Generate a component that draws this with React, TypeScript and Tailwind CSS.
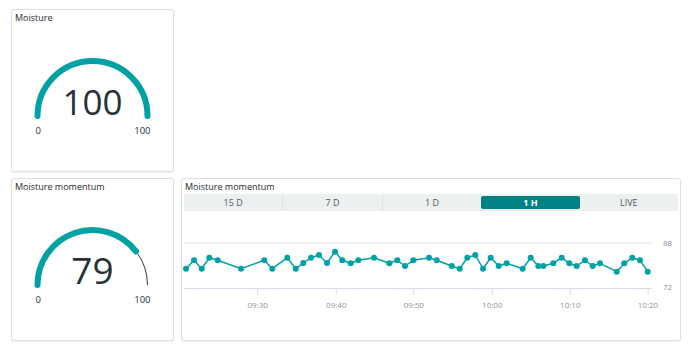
// Dashboard: two gauges and a moisture line chart with range tabs.
const TEAL = '#00a1a5';
const FONT = '"Open Sans", "Noto Sans", sans-serif';

// chart points in page px, shifted into the chart svg below
const POINTS: [number, number][] = [
  [186, 268.7], [194, 260.3], [201.7, 268.7], [209.3, 257.7], [217.7, 260.3],
  [241, 268.7], [264.3, 260.3], [272.3, 268.7], [287.3, 257.7], [295.7, 268.7],
  [303.3, 263], [311, 257.7], [319, 255], [327, 263], [335, 251.7],
  [342.3, 260.3], [350.7, 263.3], [358.3, 260.3], [374, 257.7], [389.3, 263.3],
  [397.3, 260.3], [405, 266], [413.3, 260.3], [429, 257.7], [436.7, 260.3],
  [451.7, 266], [459.7, 268.7], [467.3, 257.7], [475.3, 255], [483, 268.7],
  [490.7, 257.7], [498.7, 266], [506.7, 263.3], [522.7, 268.7], [530.7, 257.7],
  [538.3, 266], [543.3, 266], [553.3, 263.3], [561.7, 257.7], [569.3, 263.3],
  [576.7, 266], [585, 260.3], [592.7, 266], [600, 263.3], [616.7, 271.7],
  [624.3, 263.3], [632.3, 257.7], [640, 260.3], [647.7, 271.7],
];

const TICKS = [
  { x: 257.7, label: '09:30' },
  { x: 336.3, label: '09:40' },
  { x: 413.7, label: '09:50' },
  { x: 492.3, label: '10:00' },
  { x: 570.3, label: '10:10' },
  { x: 648, label: '10:20' },
];

const TABS = ['15 D', '7 D', '1 D', '1 H', 'LIVE'];

function Card({ title, className, children }: { title: string; className: string; children: React.ReactNode }) {
  return (
    <div
      className={`flex flex-col rounded-[3px] border border-[#dadfdf] bg-white shadow-[0_1px_2px_rgba(0,0,0,0.06)] ${className}`}
    >
      <div className="h-[15px] pl-[3px] pt-[1px] text-[9px] leading-[13px] text-[#1f2a30]">{title}</div>
      {children}
    </div>
  );
}

function Gauge({ value, size }: { value: number; size: number }) {
  const cx = 80.5;
  const cy = 91;
  const r = 55;
  const a = Math.PI - (value / 100) * Math.PI;
  const ex = cx + r * Math.cos(a);
  const ey = cy - r * Math.sin(a);
  return (
    <svg width="161" height="145" style={{ fontFamily: FONT }}>
      {value < 100 && (
        <path d={`M ${ex} ${ey} A ${r} ${r} 0 0 1 ${cx + r} ${cy}`} fill="none" stroke="#2f3a40" strokeWidth="1" />
      )}
      <path
        d={`M ${cx - r} ${cy} A ${r} ${r} 0 0 1 ${ex} ${ey}`}
        fill="none"
        stroke={TEAL}
        strokeWidth="6"
        strokeLinecap="round"
      />
      <text x={cx} y="90" textAnchor="middle" fontSize={size} fontWeight="400" fill="#263238">
        {value}
      </text>
      <text x="23.5" y="109" fontSize="9.5" fill="#263238">0</text>
      <text x="138.5" y="109" textAnchor="end" fontSize="9.5" fill="#263238">100</text>
    </svg>
  );
}

function Chart() {
  const ox = 182;
  const oy = 211;
  const pts = POINTS.map(([x, y]) => [x - ox, y - oy]);
  return (
    <svg width="498" height="128" style={{ fontFamily: FONT }}>
      <line x1="2" y1="32" x2="470" y2="32" stroke="#e0e7e7" strokeWidth="1" />
      <text x="481" y="35" fontSize="8" fill="#8a9499">88</text>
      <line x1="2" y1="77.5" x2="470" y2="77.5" stroke="#d6dfec" strokeWidth="1" />
      <text x="481" y="79" fontSize="8" fill="#8a9499">72</text>
      {TICKS.map((t) => (
        <g key={t.label}>
          <line x1={t.x - ox} y1="78" x2={t.x - ox} y2="84" stroke="#d6dfec" strokeWidth="1" />
          <text x={t.x - ox} y="97" textAnchor="middle" fontSize="8" fill="#8a9499">
            {t.label}
          </text>
        </g>
      ))}
      <polyline
        points={pts.map((p) => p.join(',')).join(' ')}
        fill="none"
        stroke={TEAL}
        strokeWidth="1.5"
        strokeLinejoin="round"
      />
      {pts.map(([x, y], i) => (
        <circle key={i} cx={x} cy={y} r="3" fill={TEAL} />
      ))}
    </svg>
  );
}

export default function App() {
  return (
    <div
      className="flex h-[345px] w-[690px] flex-col gap-[6px] bg-white pl-[11px] pt-[9px]"
      style={{ fontFamily: FONT }}
    >
      <Card title="Moisture" className="h-[163px] w-[163px]">
        <Gauge value={100} size={35} />
      </Card>

      <div className="flex gap-[7px]">
        <Card title="Moisture momentum" className="h-[163px] w-[163px]">
          <Gauge value={79} size={37} />
        </Card>

        <Card title="Moisture momentum" className="h-[163px] w-[500px]">
          {/* range tabs */}
          <div className="mx-[2px] flex h-[17px] bg-[#ecf0f0]">
            {TABS.map((tab, i) => (
              <div
                key={tab}
                className={`flex flex-1 items-center justify-center py-[2px] ${
                  i > 0 && i < 3 ? 'border-l border-[#dde3e3]' : ''
                }`}
              >
                {tab === '1 H' ? (
                  <div className="flex h-full w-full items-center justify-center rounded-[2px] bg-[#008184] text-[9px] font-bold text-white">
                    {tab}
                  </div>
                ) : (
                  <span className="text-[9px] text-[#4e5b61]">{tab}</span>
                )}
              </div>
            ))}
          </div>
          <Chart />
        </Card>
      </div>
    </div>
  );
}
